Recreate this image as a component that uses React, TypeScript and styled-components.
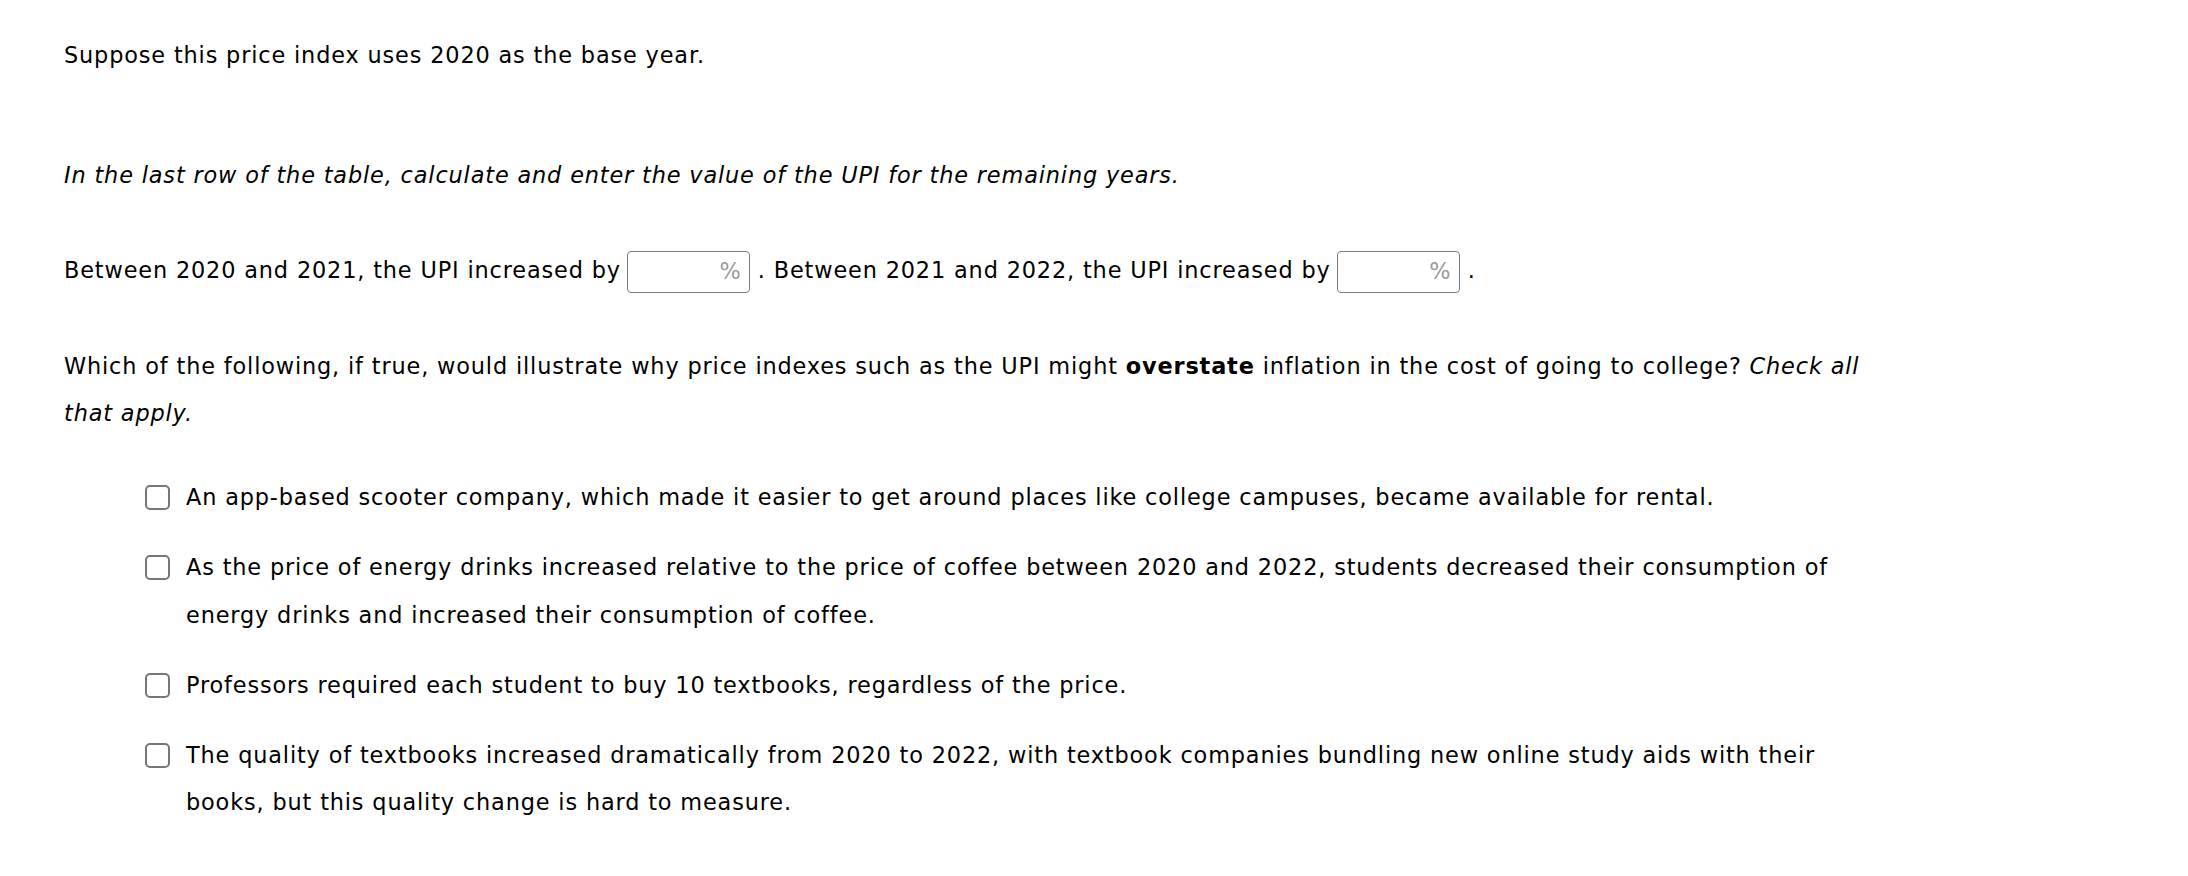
import { createGlobalStyle, styled } from "styled-components";

const GlobalStyle = createGlobalStyle`
  html, body {
    margin: 0;
    padding: 0;
    background: #fff;
  }
  body {
    font-family: "DejaVu Sans", Verdana, sans-serif;
    color: #000;
  }
`;

const Page = styled.div`
  padding: 32px 0 0 64px;
  width: 1816px;
  font-size: 22.4px;
  line-height: 47.6px;
  letter-spacing: 0.85px;
`;

const Para = styled.p<{ $gap?: number }>`
  margin: 0;
  margin-top: ${(p) => p.$gap ?? 0}px;
`;

const Italic = styled.span`
  font-style: italic;
`;

const Strong = styled.b`
  font-weight: bold;
`;

const PercentBox = styled.span`
  display: inline-flex;
  align-items: center;
  justify-content: flex-end;
  box-sizing: border-box;
  width: 123px;
  height: 42px;
  margin: 0 8px 0 6px;
  padding-right: 8px;
  border: 1.4px solid #7a7a7a;
  border-radius: 4px;
  vertical-align: middle;
  color: #9a9a9a;
  line-height: 1;
  letter-spacing: 0;
`;

const Options = styled.div`
  margin: 36px 0 0 81px;
  display: flex;
  flex-direction: column;
  gap: 22.4px;
`;

const Option = styled.label`
  display: flex;
  align-items: flex-start;
  gap: 16px;
`;

const Box = styled.span`
  flex: none;
  box-sizing: border-box;
  width: 25px;
  height: 25px;
  margin-top: 11px;
  border: 2px solid #767676;
  border-radius: 5px;
  background: #fff;
`;

const options = [
  "An app-based scooter company, which made it easier to get around places like college campuses, became available for rental.",
  "As the price of energy drinks increased relative to the price of coffee between 2020 and 2022, students decreased their consumption of energy drinks and increased their consumption of coffee.",
  "Professors required each student to buy 10 textbooks, regardless of the price.",
  "The quality of textbooks increased dramatically from 2020 to 2022, with textbook companies bundling new online study aids with their books, but this quality change is hard to measure.",
];

export default function App() {
  return (
    <>
      <GlobalStyle />
      <Page>
        <Para>Suppose this price index uses 2020 as the base year.</Para>
        <Para $gap={72}>
          <Italic>In the last row of the table, calculate and enter the value of the UPI for the remaining years.</Italic>
        </Para>
        <Para $gap={48}>
          Between 2020 and 2021, the UPI increased by<PercentBox>%</PercentBox>. Between 2021 and 2022, the UPI increased by
          <PercentBox>%</PercentBox>.
        </Para>
        <Para $gap={48}>
          Which of the following, if true, would illustrate why price indexes such as the UPI might <Strong>overstate</Strong> inflation
          in the cost of going to college? <Italic>Check all that apply.</Italic>
        </Para>
        <Options>
          {options.map((o) => (
            <Option key={o}>
              <Box />
              <span>{o}</span>
            </Option>
          ))}
        </Options>
      </Page>
    </>
  );
}
